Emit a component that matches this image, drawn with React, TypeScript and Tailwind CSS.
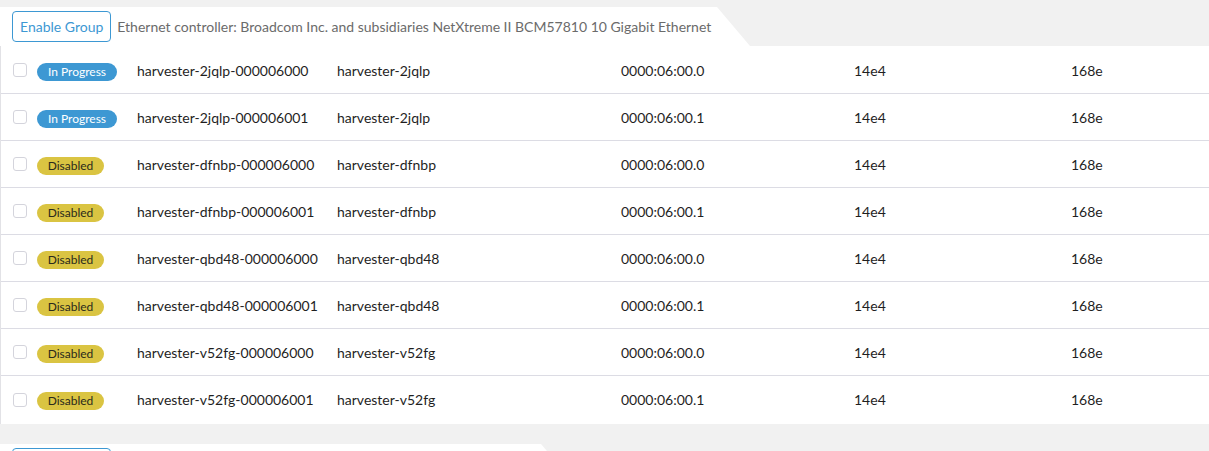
const rows = [
  { status: 'In Progress', name: 'harvester-2jqlp-000006000', node: 'harvester-2jqlp', address: '0000:06:00.0' },
  { status: 'In Progress', name: 'harvester-2jqlp-000006001', node: 'harvester-2jqlp', address: '0000:06:00.1' },
  { status: 'Disabled', name: 'harvester-dfnbp-000006000', node: 'harvester-dfnbp', address: '0000:06:00.0' },
  { status: 'Disabled', name: 'harvester-dfnbp-000006001', node: 'harvester-dfnbp', address: '0000:06:00.1' },
  { status: 'Disabled', name: 'harvester-qbd48-000006000', node: 'harvester-qbd48', address: '0000:06:00.0' },
  { status: 'Disabled', name: 'harvester-qbd48-000006001', node: 'harvester-qbd48', address: '0000:06:00.1' },
  { status: 'Disabled', name: 'harvester-v52fg-000006000', node: 'harvester-v52fg', address: '0000:06:00.0' },
  { status: 'Disabled', name: 'harvester-v52fg-000006001', node: 'harvester-v52fg', address: '0000:06:00.1' },
];

const Badge = ({ status }: { status: string }) =>
  status === 'In Progress' ? (
    <span className="inline-flex h-[18px] w-[80px] items-center justify-center rounded-full bg-[#3d98d3] text-[12px] text-white">
      In Progress
    </span>
  ) : (
    <span className="inline-flex h-[18px] w-[67px] items-center justify-center rounded-full bg-[#dac442] text-[12px] text-[#2b2a1c]">
      Disabled
    </span>
  );

const GroupHeader = ({ label, width }: { label: string; width: string }) => (
  <div
    className={`flex h-[39px] items-center bg-white pl-[12px] ${width} [clip-path:polygon(0_0,calc(100%_-_33px)_0,100%_100%,0_100%)]`}
  >
    <button className="h-[31px] rounded-[4px] border border-[#3d98d3] px-[7px] text-[14px] text-[#3d98d3]">
      Enable Group
    </button>
    <span className="ml-[6px] whitespace-nowrap text-[14px] text-[#6b6b6b]">{label}</span>
  </div>
);

export default function App() {
  return (
    <div className="h-[451px] overflow-hidden bg-[#f1f1f1] pt-[7px] font-['Lato','Liberation_Sans',sans-serif] text-[#1f1f1f]">
      <GroupHeader
        width="w-[750px]"
        label="Ethernet controller: Broadcom Inc. and subsidiaries NetXtreme II BCM57810 10 Gigabit Ethernet"
      />
      <div className="border-l border-[#e2e2e6] bg-white pt-[1px] pb-[1px]">
        {rows.map((row, i) => (
          <div
            key={row.name}
            className={`flex h-[47px] items-center text-[14px] ${i < rows.length - 1 ? 'border-b border-[#dcdce4]' : ''}`}
          >
            <div className="w-[36px] pl-[12px]">
              <div className="h-[14px] w-[14px] rounded-[3px] border border-[#d4d4dc] bg-white" />
            </div>
            <div className="w-[100px]">
              <Badge status={row.status} />
            </div>
            <div className="w-[200px]">{row.name}</div>
            <div className="w-[284px]">{row.node}</div>
            <div className="w-[233px]">{row.address}</div>
            <div className="w-[217px]">14e4</div>
            <div>168e</div>
          </div>
        ))}
      </div>
      <div className="mt-[20px]">
        <GroupHeader width="w-[574px]" label="Ethernet controller: Intel Corporation 82599ES 10-Gigabit" />
      </div>
    </div>
  );
}
